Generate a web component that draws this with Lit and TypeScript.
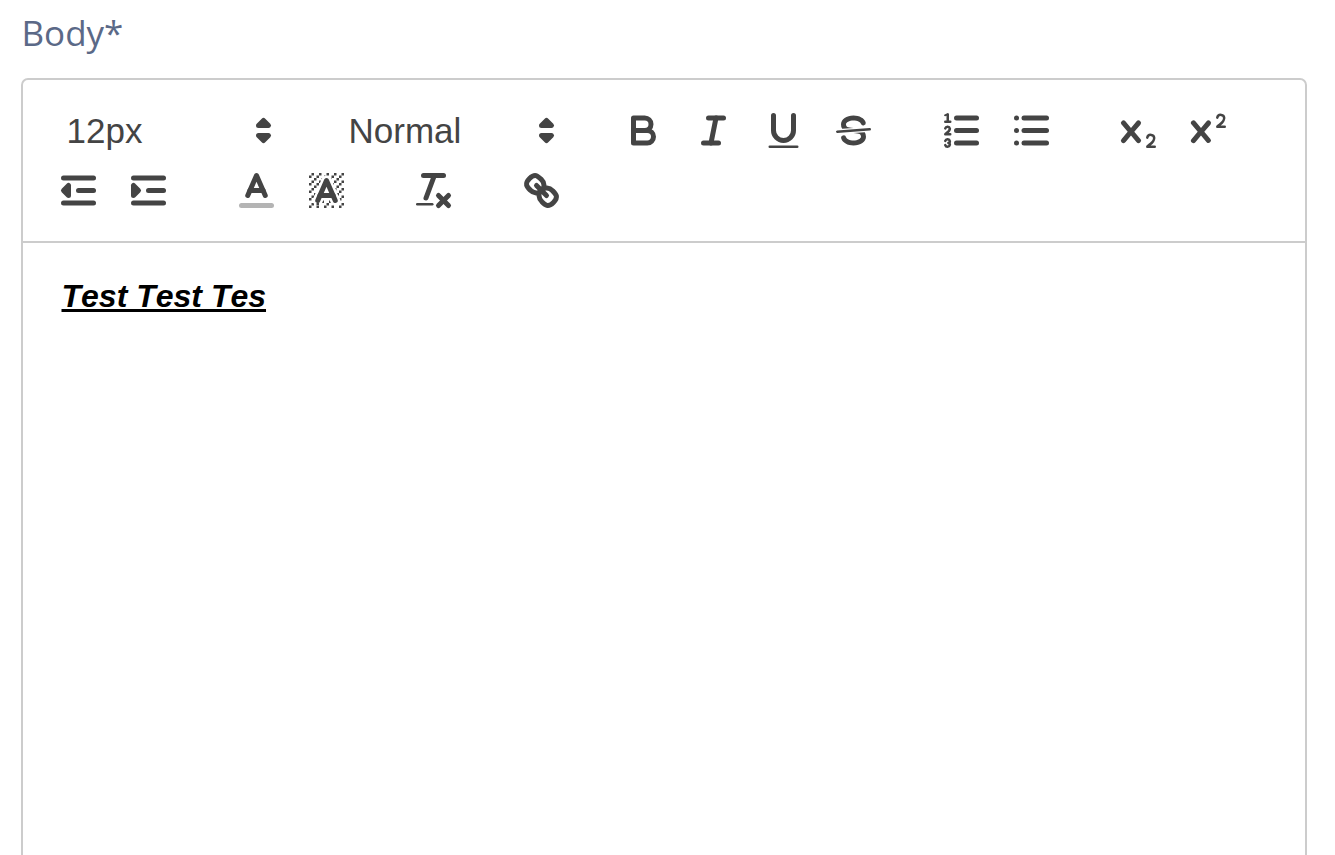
import { LitElement, html, css, svg } from "lit";
import { customElement } from "lit/decorators.js";

const ic = (body: unknown) => html`<svg class="ic" viewBox="0 0 18 18">${body}</svg>`;

const icons: Record<string, unknown> = {
  bold: ic(svg`<path class="st" d="M5,4H9.5A2.5,2.5,0,0,1,12,6.5v0A2.5,2.5,0,0,1,9.5,9H5A0,0,0,0,1,5,9V4A0,0,0,0,1,5,4Z"/><path class="st" d="M5,9h5.5A2.5,2.5,0,0,1,13,11.5v0A2.5,2.5,0,0,1,10.5,14H5a0,0,0,0,1,0,0V9A0,0,0,0,1,5,9Z"/>`),
  italic: ic(svg`<line class="st" x1="7" x2="13" y1="4" y2="4"/><line class="st" x1="5" x2="11" y1="14" y2="14"/><line class="st" x1="8" x2="10" y1="14" y2="4"/>`),
  underline: ic(svg`<path class="st" d="M5,3V9a4.012,4.012,0,0,0,4,4H9a4.012,4.012,0,0,0,4-4V3"/><rect class="fl" height="1" rx="0.5" ry="0.5" width="12" x="3" y="15"/>`),
  strike: ic(svg`<line class="st thin" x1="15.5" x2="2.5" y1="8.5" y2="9.5"/><path class="fl" d="M9.007,8C6.542,7.791,6,7.519,6,6.5,6,5.792,7.283,5,9,5c1.571,0,2.765.679,2.969,1.309a1,1,0,0,0,1.9-.617C13.356,4.106,11.354,3,9,3,6.2,3,4,4.538,4,6.5a3.2,3.2,0,0,0,.5,1.843Z"/><path class="fl" d="M8.984,10C11.457,10.208,12,10.479,12,11.5c0,.708-1.283,1.5-3,1.5-1.571,0-2.765-.679-2.969-1.309a1,1,0,1,0-1.9.617C4.644,13.894,6.646,15,9,15c2.8,0,5-1.538,5-3.5a3.2,3.2,0,0,0-.5-1.843Z"/>`),
  ordered: ic(svg`<line class="st" x1="7" x2="15" y1="4" y2="4"/><line class="st" x1="7" x2="15" y1="9" y2="9"/><line class="st" x1="7" x2="15" y1="14" y2="14"/><line class="st thin" x1="2.5" x2="4.5" y1="5.5" y2="5.5"/><path class="fl" d="M3.5,6A0.5,0.5,0,0,1,3,5.5V3.085l-0.276.138A0.5,0.5,0,0,1,2.053,3c-0.124-.247-0.023-0.324.224-0.447l1-.5A0.5,0.5,0,0,1,4,2.5v3A0.5,0.5,0,0,1,3.5,6Z"/><path class="st thin" d="M4.5,10.5h-2c0-.234,1.85-1.076,1.85-2.234A0.959,0.959,0,0,0,2.5,8.156"/><path class="st thin" d="M2.5,14.846a0.959,0.959,0,0,0,1.85-.109A0.7,0.7,0,0,0,3.75,14a0.688,0.688,0,0,0,.6-0.736,0.959,0.959,0,0,0-1.85-.109"/>`),
  bullet: ic(svg`<line class="st" x1="6" x2="15" y1="4" y2="4"/><line class="st" x1="6" x2="15" y1="9" y2="9"/><line class="st" x1="6" x2="15" y1="14" y2="14"/><line class="st" x1="3" x2="3" y1="4" y2="4"/><line class="st" x1="3" x2="3" y1="9" y2="9"/><line class="st" x1="3" x2="3" y1="14" y2="14"/>`),
  sub: ic(svg`<path class="fl" d="M15.5,15H13.861a3.858,3.858,0,0,0,1.914-2.975,1.8,1.8,0,0,0-1.6-1.751A1.921,1.921,0,0,0,12.021,11.7a0.50013,0.50013,0,1,0,.957.291h0a0.914,0.914,0,0,1,1.053-.725,0.81,0.81,0,0,1,.744.762c0,1.076-1.16971,1.86982-1.93971,2.43082A1.45639,1.45639,0,0,0,12,15.5a0.5,0.5,0,0,0,.5.5h3A0.5,0.5,0,0,0,15.5,15Z"/><path class="fl" d="M9.65,5.241a1,1,0,0,0-1.409.108L6,7.964,3.759,5.349A1,1,0,0,0,2.192,6.59178Q2.21541,6.6213,2.241,6.649L4.684,9.5,2.241,12.35A1,1,0,0,0,3.71,13.70722q0.02557-.02768.049-0.05722L6,11.036,8.241,13.65a1,1,0,1,0,1.567-1.24277Q9.78459,12.3777,9.759,12.35L7.316,9.5,9.759,6.651A1,1,0,0,0,9.65,5.241Z"/>`),
  sup: ic(svg`<path class="fl" d="M15.5,7H13.861a4.015,4.015,0,0,0,1.914-2.975,1.8,1.8,0,0,0-1.6-1.751A1.922,1.922,0,0,0,12.021,3.7a0.5,0.5,0,1,0,.957.291,0.917,0.917,0,0,1,1.053-.725,0.81,0.81,0,0,1,.744.762c0,1.077-1.164,1.925-1.934,2.486A1.423,1.423,0,0,0,12,7.5a0.5,0.5,0,0,0,.5.5h3A0.5,0.5,0,0,0,15.5,7Z"/><path class="fl" d="M9.651,5.241a1,1,0,0,0-1.41.108L6,7.964,3.759,5.349a1,1,0,1,0-1.519,1.3L4.683,9.5,2.241,12.35a1,1,0,1,0,1.519,1.3L6,11.036,8.241,13.65a1,1,0,0,0,1.519-1.3L7.317,9.5,9.759,6.651A1,1,0,0,0,9.651,5.241Z"/>`),
  outdent: ic(svg`<line class="st" x1="3" x2="15" y1="14" y2="14"/><line class="st" x1="3" x2="15" y1="4" y2="4"/><line class="st" x1="9" x2="15" y1="9" y2="9"/><polyline class="st fl" points="5 7 5 11 3 9 5 7"/>`),
  indent: ic(svg`<line class="st" x1="3" x2="15" y1="14" y2="14"/><line class="st" x1="3" x2="15" y1="4" y2="4"/><line class="st" x1="9" x2="15" y1="9" y2="9"/><polyline class="st fl" points="3 7 3 11 5 9 3 7"/>`),
  color: ic(svg`<line class="st faint" x1="3" x2="15" y1="15" y2="15"/><polyline class="st" points="5.5 11 9 3 12.5 11"/><line class="st" x1="11.63" x2="6.38" y1="9" y2="9"/>`),
  background: ic(svg`<g class="fl">
    <polygon points="6 6.868 6 6 5 6 5 7 5.942 7 6 6.868"/><rect height="1" width="1" x="4" y="4"/><polygon points="6.817 5 6 5 6 6 6.38 6 6.817 5"/><rect height="1" width="1" x="2" y="6"/><rect height="1" width="1" x="3" y="5"/><rect height="1" width="1" x="4" y="7"/><polygon points="4 11.439 4 11 3 11 3 12 3.755 12 4 11.439"/><rect height="1" width="1" x="2" y="12"/><rect height="1" width="1" x="2" y="9"/><rect height="1" width="1" x="2" y="15"/><polygon points="4.63 10 4 10 4 11 4.192 11 4.63 10"/><rect height="1" width="1" x="3" y="8"/>
    <path d="M10.832,4.2L11,4.582V4H10.708A1.948,1.948,0,0,1,10.832,4.2Z"/><path d="M7,4.582L7.168,4.2A1.929,1.929,0,0,1,7.292,4H7V4.582Z"/><path d="M8,13H7.683l-0.351.8a1.933,1.933,0,0,1-.124.2H8V13Z"/>
    <rect height="1" width="1" x="12" y="2"/><rect height="1" width="1" x="11" y="3"/><path d="M9,3H8V3.282A1.985,1.985,0,0,1,9,3Z"/><rect height="1" width="1" x="2" y="3"/><rect height="1" width="1" x="6" y="2"/><rect height="1" width="1" x="3" y="2"/><rect height="1" width="1" x="5" y="3"/><rect height="1" width="1" x="9" y="2"/><rect height="1" width="1" x="15" y="14"/>
    <polygon points="13.247 10 13.555 10.7 13.684 11 14 11 14 10 13.247 10"/><rect height="1" width="1" x="13" y="7"/><rect height="1" width="1" x="15" y="5"/><rect height="1" width="1" x="14" y="6"/><rect height="1" width="1" x="15" y="8"/><rect height="1" width="1" x="14" y="9"/>
    <path d="M3.775,14H3v1H4V14.314A1.97,1.97,0,0,1,3.775,14Z"/><rect height="1" width="1" x="14" y="3"/><polygon points="12 6.868 12 6 11.62 6 12 6.868"/><rect height="1" width="1" x="15" y="2"/><rect height="1" width="1" x="12" y="5"/><rect height="1" width="1" x="13" y="4"/><polygon points="12.933 9 13 9 13 8 12.495 8 12.933 9"/><rect height="1" width="1" x="9" y="14"/><rect height="1" width="1" x="8" y="15"/>
    <path d="M6,14.926V14H5v0.926A1.5,1.5,0,0,1,6,14.926Z"/><rect height="1" width="1" x="5" y="15"/><path d="M10.668,13.8L10.317,13H10v1h0.792A1.947,1.947,0,0,1,10.668,13.8Z"/><rect height="1" width="1" x="11" y="15"/><path d="M14.332,12.2a1.99,1.99,0,0,1,.166.8H15V12H14.245Z"/><rect height="1" width="1" x="14" y="15"/><rect height="1" width="1" x="15" y="11"/>
  </g><polyline class="st" points="5.5 13 9 5 12.5 13"/><line class="st" x1="11.63" x2="6.38" y1="11" y2="11"/>`),
  clean: ic(svg`<line class="st" x1="5" x2="13" y1="3" y2="3"/><line class="st" x1="6" x2="9.35" y1="12" y2="3"/><line class="st" x1="11" x2="15" y1="11" y2="15"/><line class="st" x1="15" x2="11" y1="11" y2="15"/><rect class="fl" height="1" rx="0.5" ry="0.5" width="7" x="2" y="14"/>`),
  link: ic(svg`<line class="st" x1="7" x2="11" y1="7" y2="11"/><path class="st" d="M8.9,4.577a3.476,3.476,0,0,1,.36,4.679A3.476,3.476,0,0,1,4.577,8.9C3.185,7.5,2.035,6.4,4.217,4.217S7.5,3.185,8.9,4.577Z"/><path class="st" d="M13.423,9.1a3.476,3.476,0,0,0-4.679-.36,3.476,3.476,0,0,0,.36,4.679c1.392,1.392,2.5,2.542,4.679.36S14.815,10.5,13.423,9.1Z"/>`),
  arrows: ic(svg`<polygon class="st" points="7 11 9 13 11 11 7 11"/><polygon class="st" points="7 7 9 5 11 7 7 7"/>`),
};

const groups = [
  ["bold", "italic", "underline", "strike"],
  ["ordered", "bullet"],
  ["sub", "sup"],
  ["outdent", "indent"],
  ["color", "background"],
  ["clean"],
  ["link"],
];

@customElement("app-root")
export class AppRoot extends LitElement {
  static styles = css`
    :host {
      display: block;
      height: 855px;
      overflow: hidden;
      background: #fff;
      box-sizing: border-box;
      padding: 7px 28px 0 21px;
    }
    .label {
      font-family: "Open Sans", sans-serif;
      font-size: 35px;
      line-height: 52px;
      color: #5b6987;
      margin-bottom: 19px;
      padding-left: 0.5px;
    }
    .box {
      border: 2px solid #ccc;
      border-radius: 7px;
      height: 1000px;
    }
    .toolbar {
      display: flex;
      flex-wrap: wrap;
      padding: 20.5px 20px 20.5px 20.5px;
      border-bottom: 2px solid #ccc;
      font-family: "Liberation Sans", Arial, sans-serif;
    }
    .formats {
      display: flex;
      margin-right: 37.5px;
      height: 60px;
    }
    .btn {
      width: 70px;
      height: 60px;
      display: flex;
      align-items: center;
      justify-content: center;
    }
    .picker {
      position: relative;
      width: 245px;
      height: 60px;
      box-sizing: border-box;
      padding-left: 22.5px;
      font-size: 35px;
      font-weight: 500;
      line-height: 60px;
      color: #444;
    }
    .picker .ic {
      position: absolute;
      right: 2px;
      top: 7.5px;
    }
    .picker.size {
      padding-left: 23px;
    }
    .picker.size .ic {
      right: 3px;
    }
    .ic {
      width: 45px;
      height: 45px;
      display: block;
    }
    .st {
      fill: none;
      stroke: #444;
      stroke-width: 2;
      stroke-linecap: round;
      stroke-linejoin: round;
      stroke-miterlimit: 10;
    }
    .thin {
      stroke-width: 1;
    }
    .fl {
      fill: #444;
    }
    .faint {
      opacity: 0.4;
    }
    .editor {
      padding: 30px 38.5px;
      font-family: "Liberation Sans", Arial, sans-serif;
      font-size: 32px;
      font-kerning: none;
      line-height: 46px;
      color: #000;
    }
    .editor b {
      font-style: italic;
      text-decoration: underline;
    }
  `;

  render() {
    return html`
      <div class="label">Body*</div>
      <div class="box">
        <div class="toolbar">
          <div class="formats"><div class="picker size">12px${icons.arrows}</div></div>
          <div class="formats"><div class="picker">Normal${icons.arrows}</div></div>
          ${groups.map(
            (g) => html`<div class="formats">${g.map((n) => html`<div class="btn">${icons[n]}</div>`)}</div>`
          )}
        </div>
        <div class="editor"><b>Test Test Tes</b></div>
      </div>
    `;
  }
}
